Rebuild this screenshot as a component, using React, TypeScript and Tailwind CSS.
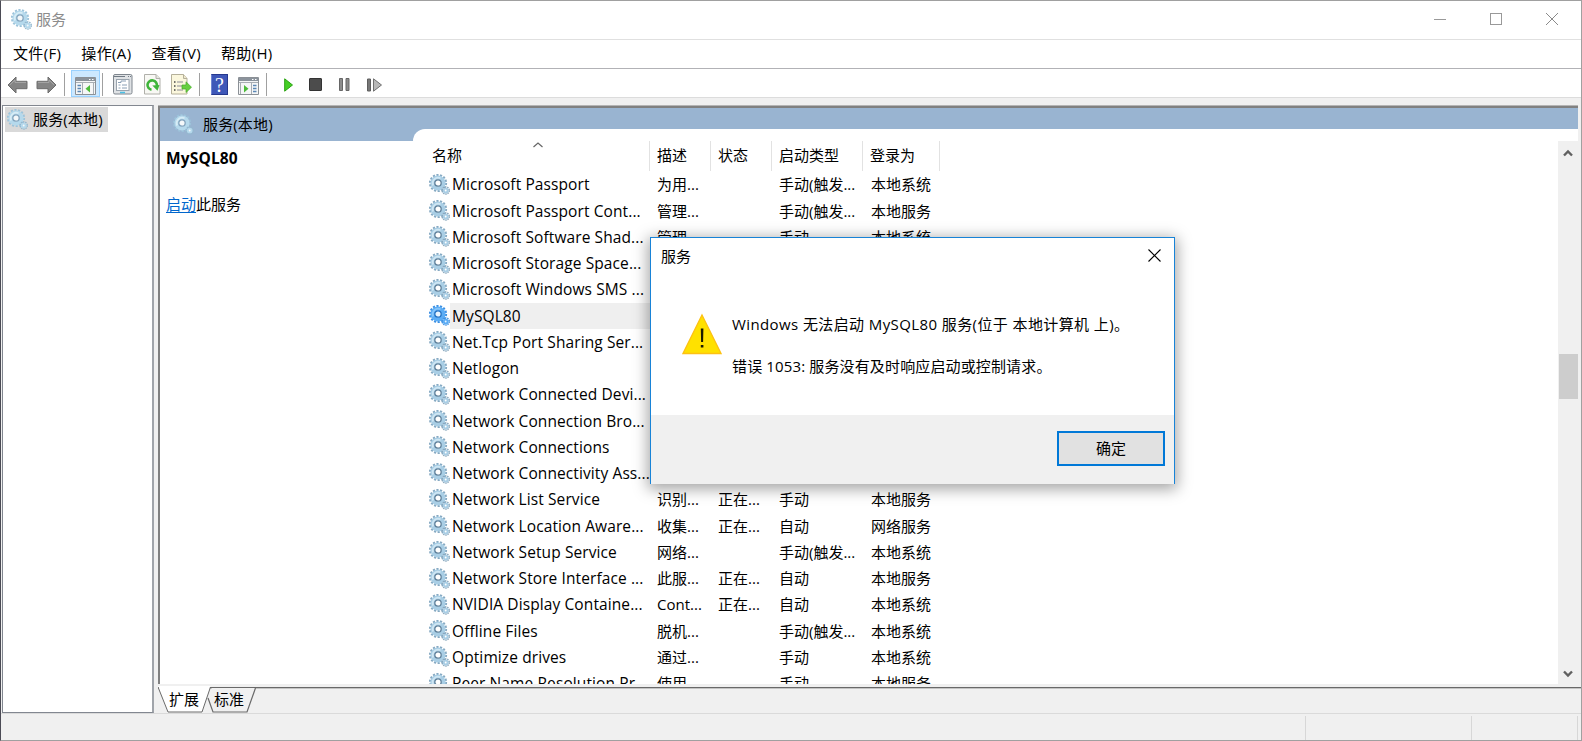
type Service = {
  name: string;
  desc?: string;
  status?: string;
  startup?: string;
  logon?: string;
  selected?: boolean;
};

const services: Service[] = [
  { name: "Microsoft Passport", desc: "为用...", startup: "手动(触发...", logon: "本地系统" },
  { name: "Microsoft Passport Cont...", desc: "管理...", startup: "手动(触发...", logon: "本地服务" },
  { name: "Microsoft Software Shad...", desc: "管理...", startup: "手动", logon: "本地系统" },
  { name: "Microsoft Storage Space..." },
  { name: "Microsoft Windows SMS ..." },
  { name: "MySQL80", selected: true },
  { name: "Net.Tcp Port Sharing Ser..." },
  { name: "Netlogon" },
  { name: "Network Connected Devi..." },
  { name: "Network Connection Bro..." },
  { name: "Network Connections" },
  { name: "Network Connectivity Ass..." },
  { name: "Network List Service", desc: "识别...", status: "正在...", startup: "手动", logon: "本地服务" },
  { name: "Network Location Aware...", desc: "收集...", status: "正在...", startup: "自动", logon: "网络服务" },
  { name: "Network Setup Service", desc: "网络...", startup: "手动(触发...", logon: "本地系统" },
  { name: "Network Store Interface ...", desc: "此服...", status: "正在...", startup: "自动", logon: "本地服务" },
  { name: "NVIDIA Display Containe...", desc: "Cont...", status: "正在...", startup: "自动", logon: "本地系统" },
  { name: "Offline Files", desc: "脱机...", startup: "手动(触发...", logon: "本地系统" },
  { name: "Optimize drives", desc: "通过...", startup: "手动", logon: "本地系统" },
  { name: "Peer Name Resolution Pr...", desc: "使用...", startup: "手动", logon: "本地服务" },
];

const gearPalettes = {
  normal: { rim: "#86a9c2", body: "#a9cee5", shine: "#cfe6f3", hole: "#ffffff", edge: "#60819b", small: "#8aa8be" },
  pale: { rim: "#9cc3da", body: "#b5d9ec", shine: "#d8edf6", hole: "#f4f8fa", edge: "#85a6bf", small: "#94b8cf" },
  selected: { rim: "#3a8fe3", body: "#5cadf5", shine: "#86c6fb", hole: "#e8f4ff", edge: "#2372c4", small: "#4795e2" },
};

function Gears({ variant = "normal" }: { variant?: keyof typeof gearPalettes }) {
  const palette = gearPalettes[variant];

  return (
    <svg width="21" height="21" viewBox="0 0 21 21" className="shrink-0">
      <circle cx="9" cy="9" r="8" fill="none" stroke={palette.rim} strokeWidth="2.2" strokeDasharray="2.1 1.49" />
      <circle cx="9" cy="9" r="5.4" fill="none" stroke={palette.body} strokeWidth="4.4" />
      <path d="M4.200 11.500A5.500 5.500 0 0 1 11.500 4.200" fill="none" stroke={palette.shine} strokeWidth="1.800" />
      <circle cx="9" cy="9" r="3.200" fill={palette.hole} stroke={palette.edge} strokeWidth="1.300" />
      <circle cx="16.700" cy="16.500" r="3.500" fill="none" stroke={palette.small} strokeWidth="1.600" strokeDasharray="1.400 .8" />
      <circle cx="16.700" cy="16.500" r="1.900" fill={palette.hole} stroke={palette.body} strokeWidth="1.900" />
    </svg>
  );
}

function Arrow({ flip }: { flip?: boolean }) {
  return (
    <svg width="21" height="18" viewBox="0 0 21 18" className={flip ? "-scale-x-100" : ""}>
      <path d="M1 9 9 1v4.300h11v7.400H9V17Z" fill="#858585" stroke="#6c6c6c" strokeLinejoin="round" />
      <path d="M3 8.800 8 4v2.400h11" fill="none" stroke="#a8a8a8" />
    </svg>
  );
}

// Console window with a tree pane; the arrow tells which side is toggled
function PaneIcon({ flip }: { flip?: boolean }) {
  return (
    <svg width="21" height="18" viewBox="0 0 21 18">
      <path d="M.5.5h20v17H.5Z" fill="#f5f6f7" stroke="#8b9096" />
      <path d="M1 1h19v3H1Z" fill="#8b939c" />
      <path d="M14 2h1.500v1H14Zm3 0h1.500v1H17Z" fill="#fff" />
      <path d="M1 5.500h19" stroke="#a8adb3" />
      <g transform={flip ? "translate(21 0) scale(-1 1)" : undefined}>
        <path d="M7.500 6v11M18.500 6v11" stroke="#a8adb3" />
        <path d="M2.500 8.500H6m-3.500 3H6m-3.500 3H6" stroke="#5b87b5" strokeWidth="1.300" />
        <path d="M15 8v7.500l-4.500-3.700Z" fill="#4dbb3a" />
      </g>
    </svg>
  );
}

function Separator() {
  return <div className="h-[23px] w-px bg-[#a0a0a0]" />;
}

function Toolbar() {
  return (
    <div className="flex h-7 shrink-0 items-center bg-white pt-[3px] pl-1.5">
      <Arrow />
      <div className="ml-2">
        <Arrow flip />
      </div>
      <div className="ml-[7px]">
        <Separator />
      </div>
      <div className="-mt-0.5 ml-1.5 flex h-[27px] w-[29px] items-center justify-center self-start border border-[#99d1ff] bg-[#cce8ff] pt-1">
        <PaneIcon />
      </div>
      <div className="ml-0.5">
        <Separator />
      </div>
      <svg width="20" height="21" viewBox="0 0 20 21" className="ml-2.5">
        <rect x=".5" y=".5" width="18.500" height="19.500" rx="1.500" fill="#dfe2e5" stroke="#7f868e" />
        <path d="M1 2.500h11m3 0h1m1 0h1" stroke="#707a84" />
        <rect x="3.500" y="5.500" width="12.500" height="11" fill="#fff" stroke="#9aa4ae" />
        <path d="M5 8.500h3V7h5M5.500 11h2m1.500 0h5m-8.500 3h2m1.500 0h5" fill="none" stroke="#8ba0b6" />
        <path d="M7 18.500h5" stroke="#49c0e6" strokeWidth="1.500" />
      </svg>
      <svg width="17" height="21" viewBox="0 0 17 21" className="ml-[11px]">
        <path d="M.5.5H12l4 4v15.500H.5Z" fill="#f8f8f4" stroke="#b0b0aa" />
        <path d="M12 .5v4h4" fill="#e6e6e0" stroke="#b0b0aa" />
        <path d="M7.500 15.700A4.700 4.700 0 1 1 12.800 12" fill="none" stroke="#3fb53a" strokeWidth="2.600" />
        <path d="m8.300 11.600 7.200-.6-2 5.800Z" fill="#3fb53a" />
      </svg>
      <svg width="21" height="21" viewBox="0 0 21 21" className="ml-2.5">
        <path d="M.5.5h12l3.500 4v15.500H.5Z" fill="#fbf7dd" stroke="#b5b09a" />
        <path d="M12.500.5v4H16" fill="#eee8cc" stroke="#b5b09a" />
        <path d="M3 8h1.500M3 12h1.500M3 16h1.500" stroke="#444" strokeWidth="1.500" />
        <path d="M6 8h6M6 12h5M6 16h6" stroke="#8c8c96" strokeWidth="1.200" />
        <path d="M11 11h4V7.800l5.500 5.400-5.500 5.300v-3.500h-4Z" fill="#67cf3f" stroke="#45aa28" strokeWidth=".7" />
      </svg>
      <div className="ml-[7px]">
        <Separator />
      </div>
      <div className="ml-[11px] flex h-[21px] w-[17px] items-center justify-center border border-[#26388d] border-l-[#7085d2] bg-[#3e57b8] font-['Liberation_Serif',serif] text-[20px] leading-none text-white">
        ?
      </div>
      <div className="ml-2.5 pt-0.5">
        <PaneIcon flip />
      </div>
      <div className="ml-[7px]">
        <Separator />
      </div>
      <svg width="10" height="14" viewBox="0 0 10 14" className="ml-[17px]">
        <path d="M.7.8v12.400L8.500 7Z" fill="#45cf25" stroke="#2ba313" strokeLinejoin="round" />
      </svg>
      <div className="ml-[15px] h-[13px] w-[13px] rounded-[1px] border border-[#333] bg-[#4c4c4c]" />
      <svg width="11" height="13" viewBox="0 0 11 13" className="ml-[17px]">
        <path d="M.5.5h3v12h-3Zm6.500 0h3v12H7Z" fill="#8c8c8c" stroke="#666" />
      </svg>
      <svg width="16" height="14" viewBox="0 0 16 14" className="ml-[17px]">
        <path d="M.5 1h3v12h-3Z" fill="#777" stroke="#5e5e5e" />
        <path d="M6.500.8v12.400L14.500 7Z" fill="#b9b9b9" stroke="#707070" />
      </svg>
    </div>
  );
}

function ListHeader() {
  return (
    <div className="relative flex h-[30px] leading-[29px]">
      <div className="w-[221px] border-r border-[#e2e2e2] pl-[3px]">名称</div>
      <div className="w-[61px] border-r border-[#e2e2e2] pl-[7px]">描述</div>
      <div className="w-[61px] border-r border-[#e2e2e2] pl-[7px]">状态</div>
      <div className="w-[91px] border-r border-[#e2e2e2] pl-[7px]">启动类型</div>
      <div className="w-[77px] border-r border-[#e2e2e2] pl-[7px]">登录为</div>
      <svg width="10" height="6" viewBox="0 0 10 6" className="absolute top-px left-[104px]">
        <path d="m.5 5 4.500-4 4.500 4" fill="none" stroke="#666" strokeWidth="1.200" />
      </svg>
    </div>
  );
}

function ServiceRow({ service }: { service: Service }) {
  return (
    <div className="grid h-[26.25px] grid-cols-[228px_61px_61px_92px_76px] items-center whitespace-nowrap">
      <div className="flex h-full items-center">
        <Gears variant={service.selected ? "selected" : "normal"} />
        <div
          className={`flex h-full flex-1 items-center pl-0.5 text-[15.5px] tracking-[0.1px] ${
            service.selected ? "bg-[#efefef]" : ""
          }`}
        >
          {service.name}
        </div>
      </div>
      <div>{service.desc}</div>
      <div>{service.status}</div>
      <div>{service.startup}</div>
      <div>{service.logon}</div>
    </div>
  );
}

function Scrollbar() {
  return (
    <div className="flex w-5 shrink-0 flex-col items-center bg-[#f0f0f0] pt-2 pb-1.5">
      <svg width="10" height="8" viewBox="0 0 10 8" className="shrink-0">
        <path d="m1 6.500 4-4 4 4" fill="none" stroke="#606060" strokeWidth="2.400" />
      </svg>
      <div className="mt-[197px] h-[45px] w-[19px] shrink-0 bg-[#cdcdcd]" />
      <svg width="10" height="8" viewBox="0 0 10 8" className="mt-auto shrink-0">
        <path d="m1 1.500 4 4 4-4" fill="none" stroke="#606060" strokeWidth="2.400" />
      </svg>
    </div>
  );
}

function ViewTabs() {
  return (
    <div className="relative h-[29px] shrink-0 pt-[3px]">
      <div className="h-px bg-[#696969]" />
      <div className="h-px bg-[#c4c4c4]" />
      <svg width="102" height="29" viewBox="0 0 102 29" className="absolute top-0 left-0">
        <path d="M54 4h43l-8 24H55l-5-13Z" fill="#f0f0f0" />
        <path d="M97.500 4 89 28H55l-5-14" fill="none" stroke="#6a6a6a" strokeWidth="1.200" />
        <path d="M0 2h52.500L44 28H10Z" fill="#fff" />
        <path d="M0 3 10 28h34l8.500-25" fill="none" stroke="#6a6a6a" />
      </svg>
      <div className="relative flex gap-[15px] pl-[11px] leading-[21px]">
        <span>扩展</span>
        <span>标准</span>
      </div>
    </div>
  );
}

function StatusBar() {
  return (
    <div className="flex flex-1 border-t border-[#dadada] pt-0.5 pr-[3px]">
      <div className="flex-1 border-r border-[#d7d7d7]" />
      <div className="w-[166px] border-r border-[#d7d7d7]" />
      <div className="w-[106px] border-r border-[#d7d7d7]" />
    </div>
  );
}

function ErrorDialog() {
  return (
    <div className="absolute top-[236px] left-[649px] flex h-[247px] w-[525px] flex-col border border-b-0 border-[#1883d7] bg-white shadow-[0_3px_14px_2px_rgba(0,0,0,0.36)]">
      <div className="flex h-[35px] items-center justify-between pr-[13px] pl-[10px]">
        <span>服务</span>
        <svg width="13" height="13" viewBox="0 0 13 13">
          <path d="m.5.5 12 12M12.500.5l-12 12" stroke="#000" strokeWidth="1.100" />
        </svg>
      </div>
      <div className="flex flex-1 pl-[31px]">
        <svg width="40" height="42" viewBox="0 0 40 42" className="mt-10">
          <path d="M20 2 39 40.500H1Z" fill="#ffe100" stroke="#fdc113" strokeWidth="1.300" />
          <path d="M18.800 15.500h2.600l-.3 13.500h-2Zm0 16.500h2.600v2.600h-2.600Z" fill="#1a1a00" />
        </svg>
        <div className="pt-[39px] pl-[10px] leading-6 whitespace-nowrap">
          <p className="h-[42px] tracking-[0.4px]">Windows 无法启动 MySQL80 服务(位于 本地计算机 上)。</p>
          <p className="tracking-[0.14px]">错误 1053: 服务没有及时响应启动或控制请求。</p>
        </div>
      </div>
      <div className="flex h-[69px] items-start justify-end bg-[#f0f0f0] pt-4 pr-[9px]">
        <button
          type="button"
          className="flex h-[35px] w-[108px] items-center justify-center border-2 border-[#0078d7] bg-[#e1e1e1] pb-0.5"
        >
          确定
        </button>
      </div>
    </div>
  );
}

export default function App() {
  return (
    <div className="relative flex h-[741px] w-[1582px] flex-col overflow-hidden border border-[#a0a0a0] border-l-[#4b4b55] bg-[#f0f0f0] font-['Open_Sans','Noto_Sans_CJK_SC',sans-serif] text-[15px] leading-5 text-black">
      <div className="flex h-[39px] shrink-0 items-center border-b border-[#e0e0e0] bg-white pb-0.5 pl-2.5 text-[#8c8c8c]">
        <Gears variant="pale" />
        <span className="ml-1">服务</span>
        <div className="ml-auto flex items-center gap-11 pr-[23px]">
          <div className="h-px w-3 bg-[#999]" />
          <div className="h-3 w-3 border border-[#999]" />
          <svg width="12" height="12" viewBox="0 0 12 12">
            <path d="m0 0 12 12M12 0 0 12" stroke="#8a8a8a" />
          </svg>
        </div>
      </div>

      <div className="flex h-[29px] shrink-0 items-center gap-5 border-b border-[#b2b2b6] bg-white pb-0.5 pl-3 tracking-[0.35px]">
        <span>文件(F)</span>
        <span>操作(A)</span>
        <span>查看(V)</span>
        <span>帮助(H)</span>
      </div>

      <Toolbar />

      <div className="flex h-[616px] shrink-0 border-t border-[#dcdcdc] pt-[7px]">
        <div className="ml-px h-[608px] w-[152px] shrink-0 border border-[#828790] border-r-2 border-r-[#a0a4aa] bg-white pt-px pl-0.5">
          <div className="flex h-[25px] w-[103px] items-center bg-[#d9d9d9] pl-0.5 whitespace-nowrap">
            <Gears variant="pale" />
            <span className="-mt-0.5 ml-[5px] tracking-[0.15px]">服务(本地)</span>
          </div>
        </div>

        <div className="ml-1 flex min-w-0 flex-1 flex-col">
          <div className="mr-[3px] h-px shrink-0 bg-[#b4b4b4]" />
          <div className="mr-[3px] flex h-[578px] shrink-0 border-t-2 border-l-2 border-[#808080] bg-[#99b4d1]">
            <div className="flex w-[253px] shrink-0 flex-col">
              <div className="flex h-[33px] items-center pl-[13px]">
                <Gears variant="pale" />
                <span className="-mt-0.5 ml-[9px] tracking-[0.15px]">服务(本地)</span>
              </div>
              <div className="flex-1 bg-white pt-[7px] pl-1.5">
                <p className="text-[15.5px] font-bold tracking-[0.15px]">MySQL80</p>
                <p className="mt-[26px]">
                  <span className="text-[#0066cc] underline underline-offset-2">启动</span>此服务
                </p>
              </div>
            </div>

            <div className="mt-[21px] flex min-w-0 flex-1 rounded-tl-[12px] bg-white pt-3">
              <div className="flex-1 overflow-hidden pl-4">
                <ListHeader />
                <div className="pt-[0.25px]">
                  {services.map((service) => (
                    <ServiceRow key={service.name} service={service} />
                  ))}
                </div>
              </div>
              <Scrollbar />
            </div>
          </div>
          <ViewTabs />
        </div>
      </div>

      <StatusBar />

      {/* desktop colour showing through at the window's left edge */}
      <div className="absolute top-[114px] -left-px h-[50px] w-px bg-[#2f8077]" />

      <ErrorDialog />
    </div>
  );
}
